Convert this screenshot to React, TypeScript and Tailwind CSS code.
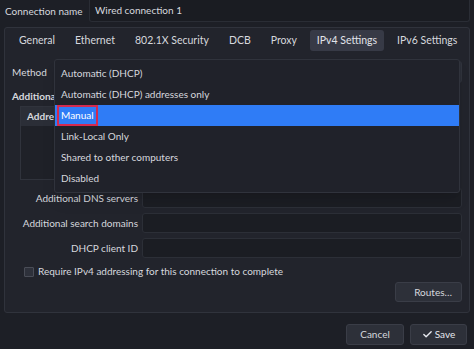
import { Check } from 'lucide-react';

/* ─── Data ─── */

const tabs = ['General', 'Ethernet', '802.1X Security', 'DCB', 'Proxy', 'IPv4 Settings', 'IPv6 Settings'];

const methods = [
  'Automatic (DHCP)',
  'Automatic (DHCP) addresses only',
  'Manual',
  'Link-Local Only',
  'Shared to other computers',
  'Disabled',
];

const fields = ['Additional DNS servers', 'Additional search domains', 'DHCP client ID'];

/* ─── Component ─── */

export default function App() {
  return (
    <div
      className="relative h-[349px] w-[474px] overflow-hidden whitespace-nowrap bg-[#1d1f26] text-[10px] text-[#d6d8de]"
      style={{ fontFamily: 'Lato, "Noto Sans", sans-serif' }}
    >
      {/* Connection name */}
      <div className="flex h-[22px] items-center">
        <span className="w-[89px] pl-[5px]">Connection name</span>
        <div className="mr-[4px] flex h-[22px] flex-1 items-center rounded-b-[3px] border border-t-0 border-[#2a2d35] bg-[#1a1c22] pl-[5px]">
          Wired connection 1
        </div>
      </div>

      {/* Tab frame */}
      <div className="mx-[4px] mt-[5px] flex h-[286px] flex-col rounded-[3px] border border-[#30333c] bg-[#22242c]">
        {/* Tab bar */}
        <div className="flex h-[23px] items-center pl-[7px] pt-[2px]">
          {tabs.map((t) => (
            <div
              key={t}
              className={`mr-[6px] flex h-[21px] items-center rounded-[3px] px-[7px] text-[10.5px] ${
                t === 'IPv4 Settings' ? 'bg-[#373a46] text-[#e2e4ea]' : ''
              }`}
            >
              {t}
            </div>
          ))}
        </div>

        {/* Panel content */}
        <div className="flex flex-1 flex-col px-[7px] pt-[10px]">
          <div className="flex h-[22px] items-center">
            <span className="w-[44px]">Method</span>
            <div className="h-[22px] flex-1 rounded-[3px] border border-[#30333c] bg-[#2b2e37]" />
          </div>

          <div className="mt-[6px] font-bold">Additional static addresses</div>

          <div className="ml-[8px] mt-[2px] h-[74px] w-[440px] border border-[#30333c] bg-[#1f2128]">
            <div className="flex h-[19px] items-center bg-[#2b2e37] pl-[6px] font-bold">Address</div>
          </div>

          {/* Extra fields */}
          <div className="mt-[8px] flex flex-col gap-[5px]">
            {fields.map((f) => (
              <div key={f} className="flex h-[20px] items-center">
                <span className="w-[130px] pr-[4px] text-right">{f}</span>
                <div className="h-[20px] flex-1 rounded-[3px] border border-[#2c2f37] bg-[#1b1d23]" />
              </div>
            ))}
          </div>

          <label className="ml-[12px] mt-[6px] flex items-center gap-[4px]">
            <span className="h-[10px] w-[10px] rounded-[1px] border border-[#4a4d57] bg-[#2e313b]" />
            <span>Require IPv4 addressing for this connection to complete</span>
          </label>

          <div className="mt-[3px] flex justify-end">
            <button className="h-[20px] w-[67px] rounded-[3px] border border-[#3a3d47] bg-[#2d3039] text-right text-[#d6d8de]">
              <span className="pr-[9px]">Routes…</span>
            </button>
          </div>
        </div>
      </div>

      {/* Dialog buttons */}
      <div className="mr-[7px] mt-[11px] flex justify-end gap-[6px]">
        <button className="h-[21px] w-[58px] rounded-[3px] border border-[#3a3d47] bg-[#2d3039] text-[#d6d8de]">
          Cancel
        </button>
        <button className="flex h-[21px] w-[57px] items-center justify-center gap-[2px] rounded-[3px] border border-[#3a3d47] bg-[#2d3039] text-[#e6e8ee]">
          <Check size={11} strokeWidth={3} />
          Save
        </button>
      </div>

      {/* Method popup */}
      <div className="absolute left-[54px] top-[59px] w-[406px] rounded-[3px] border border-[#30333c] bg-[#20222a] py-[3px] shadow-lg">
        {methods.map((m) => (
          <div
            key={m}
            className={`flex h-[21px] items-center pl-[2px] ${m === 'Manual' ? 'bg-[#2f7cf6] text-white' : ''}`}
          >
            <span className={`px-[2px] py-[1px] ${m === 'Manual' ? 'border-[2px] border-[#d42a4f]' : 'border-[2px] border-transparent'}`}>
              {m}
            </span>
          </div>
        ))}
      </div>
    </div>
  );
}
